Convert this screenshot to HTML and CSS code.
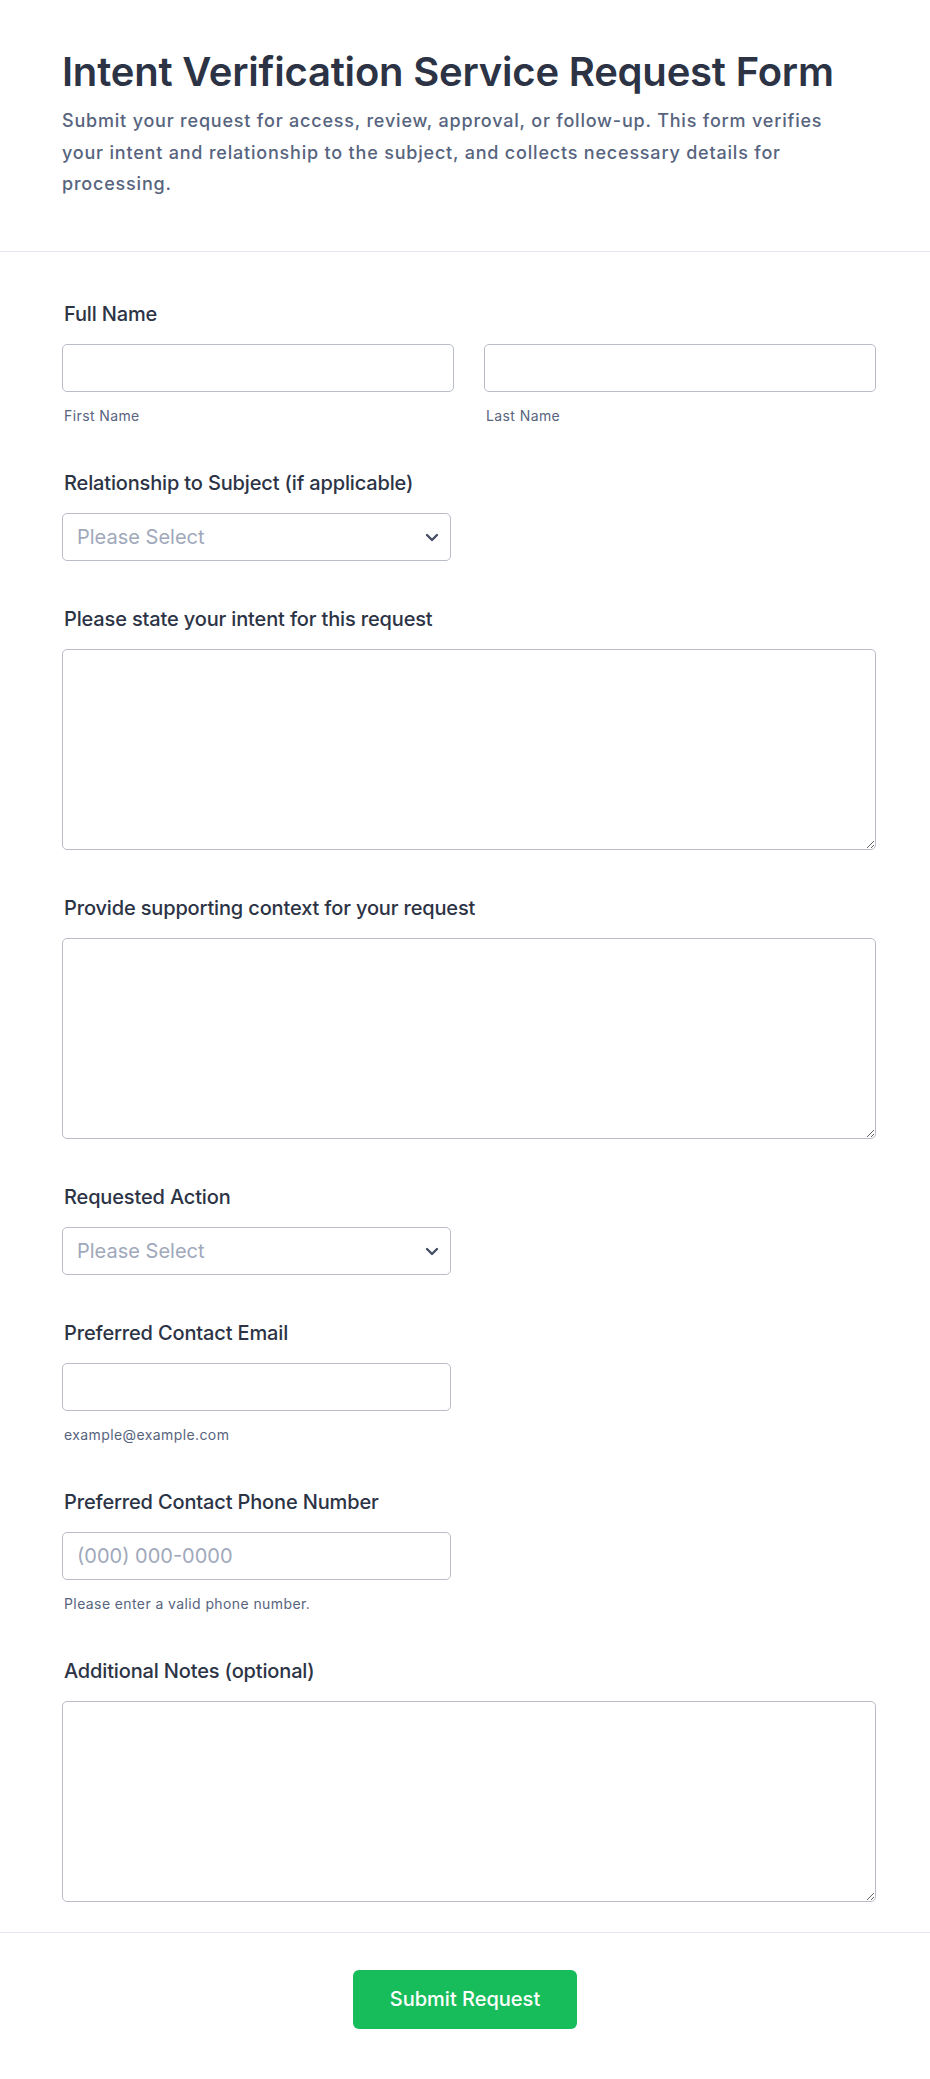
FILE: index.html
```html
<!DOCTYPE html>
<html lang="en">
  <head>
    <meta charset="UTF-8" />
    <meta name="viewport" content="width=device-width, initial-scale=1.0" />
    <title>Intent Verification Service Request Form</title>
    <link rel="stylesheet" href="styles.css">
  </head>
  <body>
    <header class="form-header">
      <h1 class="form-title">Intent Verification Service Request Form</h1>
      <p class="form-desc">Submit your request for access, review, approval, or follow-up. This form verifies your intent and relationship to the subject, and collects necessary details for processing.</p>
    </header>

    <form class="form-body" action="#">
      <div class="field">
        <label class="label" for="first">Full Name</label>
        <div class="name-row">
          <div>
            <input class="input" id="first" type="text" />
            <span class="sublabel">First Name</span>
          </div>
          <div>
            <input class="input" id="last" type="text" />
            <span class="sublabel">Last Name</span>
          </div>
        </div>
      </div>

      <div class="field">
        <label class="label" for="relationship">Relationship to Subject (if applicable)</label>
        <div class="select-wrap">
          <select class="select" id="relationship">
            <option>Please Select</option>
          </select>
          <svg class="chevron" width="14" height="9" viewBox="0 0 14 9" aria-hidden="true">
            <path d="M2 2l5 5 5-5" fill="none" stroke="#454f63" stroke-width="2.4" stroke-linecap="round" stroke-linejoin="round"/>
          </svg>
        </div>
      </div>

      <div class="field">
        <label class="label" for="intent">Please state your intent for this request</label>
        <textarea class="textarea" id="intent"></textarea>
      </div>

      <div class="field">
        <label class="label" for="context">Provide supporting context for your request</label>
        <textarea class="textarea" id="context"></textarea>
      </div>

      <div class="field">
        <label class="label" for="action">Requested Action</label>
        <div class="select-wrap">
          <select class="select" id="action">
            <option>Please Select</option>
          </select>
          <svg class="chevron" width="14" height="9" viewBox="0 0 14 9" aria-hidden="true">
            <path d="M2 2l5 5 5-5" fill="none" stroke="#454f63" stroke-width="2.4" stroke-linecap="round" stroke-linejoin="round"/>
          </svg>
        </div>
      </div>

      <div class="field">
        <label class="label" for="email">Preferred Contact Email</label>
        <input class="input half" id="email" type="email" />
        <span class="sublabel">example@example.com</span>
      </div>

      <div class="field">
        <label class="label" for="phone">Preferred Contact Phone Number</label>
        <input class="input half" id="phone" type="tel" placeholder="(000) 000-0000" />
        <span class="sublabel">Please enter a valid phone number.</span>
      </div>

      <div class="field">
        <label class="label" for="notes">Additional Notes (optional)</label>
        <textarea class="textarea" id="notes"></textarea>
      </div>
    </form>

    <div class="form-footer">
      <button class="submit" type="submit">Submit Request</button>
    </div>
  </body>
</html>
```

FILE: styles.css
```css
* {
  box-sizing: border-box;
}
body {
  margin: 0;
  background: #fff;
  font-family: Inter, "Noto Sans", sans-serif;
  color: #2c3345;
}
.form-header {
  padding: 48px 54px 51px 62px;
  border-bottom: 1px solid #e3e6ed;
}
.form-title {
  margin: 0;
  font-size: 40px;
  line-height: 48px;
  font-weight: 600;
  letter-spacing: -0.2px;
  color: #2c3345;
}
.form-desc {
  max-width: 788px;
  margin: 9px 0 0;
  font-size: 18px;
  line-height: 31.6px;
  font-weight: 500;
  letter-spacing: 0.8px;
  color: #57647e;
}
.form-body {
  display: flex;
  flex-direction: column;
  gap: 46px;
  padding: 50px 54px 30px 62px;
}
.label {
  display: block;
  margin-bottom: 18px;
  padding-left: 2px;
  font-size: 20px;
  line-height: 24px;
  font-weight: 500;
  letter-spacing: -0.15px;
  color: #2c3345;
}
.name-row {
  display: grid;
  grid-template-columns: 1fr 1fr;
  gap: 30px;
}
.input,
.select,
.textarea {
  display: block;
  width: 100%;
  border: 1px solid #b8bdc9;
  border-radius: 5px;
  background: #fff;
  font-family: inherit;
  font-size: 20px;
  color: #2c3345;
}
.input,
.select {
  height: 48px;
  padding: 0 14px;
}
.input.half {
  width: 389px;
}
.input::placeholder {
  color: #a0a8bb;
}
.textarea {
  height: 201px;
  padding: 10px 14px;
}
.sublabel {
  display: block;
  margin-top: 15px;
  padding-left: 2px;
  font-size: 14px;
  line-height: 18px;
  letter-spacing: 0.4px;
  color: #57647e;
}
.select-wrap {
  position: relative;
  width: 389px;
}
.select {
  appearance: none;
  -webkit-appearance: none;
  color: #a0a8bb;
}
.chevron {
  position: absolute;
  top: 20px;
  right: 12px;
  pointer-events: none;
}
.form-footer {
  padding: 37px 0 49px;
  border-top: 1px solid #e3e6ed;
  text-align: center;
}
.submit {
  height: 59px;
  padding: 0 37px;
  border: 0;
  border-radius: 6px;
  background: #18bd5b;
  color: #fff;
  font-family: inherit;
  font-size: 20px;
  font-weight: 500;
}
```
